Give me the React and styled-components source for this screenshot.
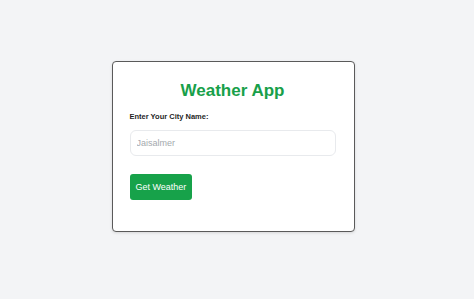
import React from "react";
import styled, { createGlobalStyle } from "styled-components";

const GlobalStyle = createGlobalStyle`
  html, body {
    margin: 0;
    padding: 0;
    background: #f3f4f6;
    font-family: "Liberation Sans", Arial, sans-serif;
  }
`;

const Page = styled.div`
  box-sizing: border-box;
  min-height: 100vh;
  display: flex;
  align-items: center;
  justify-content: center;
  padding: 0 8px 7px 0;
`;

const Card = styled.div`
  box-sizing: border-box;
  width: 243px;
  height: 171px;
  background: #ffffff;
  border: 1px solid #5a5a5a;
  border-radius: 4px;
  box-shadow: 0 1px 3px rgba(0, 0, 0, 0.12);
  padding: 19px 18px 0 17px;
  display: flex;
  flex-direction: column;
`;

const Title = styled.h1`
  margin: 0;
  font-size: 17px;
  line-height: 20px;
  font-weight: 700;
  color: #18a04a;
  text-align: center;
`;

const Label = styled.label`
  margin-top: 11px;
  font-size: 7.5px;
  line-height: 10px;
  font-weight: 700;
  color: #1f1f1f;
`;

const Input = styled.input`
  box-sizing: border-box;
  margin-top: 8px;
  width: 100%;
  height: 26px;
  border: 1px solid #e8eaed;
  border-radius: 6px;
  padding: 0 6px;
  font-family: inherit;
  font-size: 9px;
  color: #333;
  outline: none;
  &::placeholder {
    color: #a4a9ae;
  }
`;

const Button = styled.button`
  align-self: flex-start;
  margin-top: 18px;
  height: 26px;
  padding: 0 6px;
  border: none;
  border-radius: 3px;
  background: #17a24a;
  color: #ffffff;
  font-family: inherit;
  font-size: 9px;
  cursor: pointer;
`;

export default function App() {
  return (
    <>
      <GlobalStyle />
      <Page>
        <Card>
          <Title>Weather App</Title>
          <Label htmlFor="city">Enter Your City Name:</Label>
          <Input id="city" type="text" placeholder="Jaisalmer" />
          <Button type="button">Get Weather</Button>
        </Card>
      </Page>
    </>
  );
}
